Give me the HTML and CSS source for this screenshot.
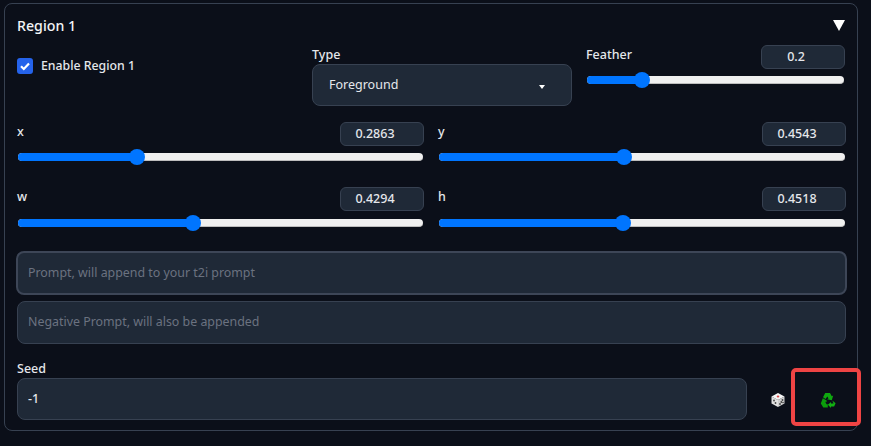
FILE: index.html
```html
<!DOCTYPE html>
<html lang="en">
<head>
<meta charset="utf-8">
<title>Region 1</title>
<link rel="stylesheet" href="styles.css">
</head>
<body>
<div class="panel">
  <div class="title-row"><span class="title">Region 1</span><span class="caret"></span></div>
  <div class="top-row">
    <label class="check"><span class="box"><svg width="12" height="12" viewBox="0 0 12 12"><path d="M2 6.2 4.8 9 10 3.4" fill="none" stroke="#fff" stroke-width="2.2"/></svg></span>Enable Region 1</label>
    <div class="type">
      <div class="label type-label">Type</div>
      <div class="select"><span>Foreground</span><span class="sel-caret"></span></div>
    </div>
    <div class="slider">
      <div class="slider-head"><span class="label">Feather</span><span class="num">0.2</span></div>
      <div class="track"><div class="fill" style="width:21.3%"></div></div>
    </div>
  </div>
  <div class="grid">
    <div class="slider">
      <div class="slider-head"><span class="label">x</span><span class="num">0.2863</span></div>
      <div class="track"><div class="fill" style="width:29.5%"></div></div>
    </div>
    <div class="slider">
      <div class="slider-head"><span class="label">y</span><span class="num">0.4543</span></div>
      <div class="track"><div class="fill" style="width:45.6%"></div></div>
    </div>
    <div class="slider">
      <div class="slider-head"><span class="label">w</span><span class="num">0.4294</span></div>
      <div class="track"><div class="fill" style="width:43.3%"></div></div>
    </div>
    <div class="slider">
      <div class="slider-head"><span class="label">h</span><span class="num">0.4518</span></div>
      <div class="track"><div class="fill" style="width:45.4%"></div></div>
    </div>
  </div>
  <div class="prompt focus">Prompt, will append to your t2i prompt</div>
  <div class="prompt neg">Negative Prompt, will also be appended</div>
  <div class="seed-row">
    <div class="seed">
      <div class="label seed-label">Seed</div>
      <div class="seed-input">-1</div>
    </div>
    <div class="tool dice">
      <svg width="16" height="16" viewBox="0 0 16 16">
        <path d="M8 1 14.500 4.500 8 8 1.500 4.500Z" fill="#f6f6f6"/>
        <path d="M1.500 4.500 8 8V15L1.500 11.500Z" fill="#e2e2e2"/>
        <path d="M8 8V15L14.500 11.500V4.500Z" fill="#cfcfcf"/>
        <ellipse cx="8" cy="4.500" rx="1.300" ry="1" fill="#d8484a"/>
        <circle cx="4" cy="8.500" r=".9" fill="#444"/><circle cx="5.500" cy="11" r=".9" fill="#444"/>
        <circle cx="10" cy="12" r=".9" fill="#444"/><circle cx="12.500" cy="8" r=".9" fill="#444"/><circle cx="11.300" cy="10" r=".9" fill="#444"/><circle cx="13" cy="10.500" r=".8" fill="#444"/>
      </svg>
    </div>
    <div class="tool recycle">
      <svg width="16" height="17" viewBox="0 0 16 17">
        <path d="M5.200 1H10L11.800 4.200 13.200 3.400 11.800 8.200 7 7.300 8.500 6.400 7.400 4.400 5.500 7 3 5.300Z" fill="#0fa80f"/>
        <path d="M2.800 6.300 6.700 8.500 6.500 9.900 5.200 9.800 6.500 12.300H7.800V15.400H3.300L.8 11.500Z" fill="#0b9c0b"/>
        <path d="M12.300 8.600 15.600 11.200 14.100 14.400H11V16L7.900 12.800 11 10V11.600H13.600Z" fill="#12b012"/>
      </svg>
    </div>
  </div>
</div>
<div class="highlight"></div>
</body>
</html>
```
FILE: styles.css
```css
* { box-sizing: border-box; }
html, body { margin: 0; height: 100%; }
body {
  background: #0b0f19;
  color: #e5e7eb;
  font-family: "Noto Sans", "Open Sans", sans-serif;
  font-size: 13px;
  line-height: 18px;
  padding: 3px 13px 0 4px;
  overflow: hidden;
  position: relative;
}
.panel {
  height: 428px;
  border: 1px solid #374151;
  border-radius: 8px;
  padding: 10px 12px 0;
}
.title-row {
  display: flex;
  justify-content: space-between;
  align-items: center;
  height: 22px;
}
.title { font-size: 14.200px; font-weight: 500; color: #f3f4f6; padding-top: 1px; }
.caret {
  width: 0; height: 0;
  border-left: 6.500px solid transparent;
  border-right: 6.500px solid transparent;
  border-top: 11px solid #fff;
}
.top-row {
  display: grid;
  grid-template-columns: 281px 260px 259px;
  column-gap: 14px;
  margin-top: 9px;
  height: 70px;
}
.check {
  display: flex;
  align-items: center;
  gap: 8px;
  height: 16px;
  margin-top: 13px;
  font-weight: 500;
  font-size: 12.300px;
}
.box {
  width: 16px; height: 16px;
  border-radius: 3px;
  background: #2563eb;
  display: flex;
  align-items: center;
  justify-content: center;
}
.label { font-weight: 500; font-size: 12.500px; color: #e5e7eb; }
.type-label { height: 18px; margin-top: 1px; line-height: 18px; }
.select {
  height: 42px;
  background: #1f2937;
  border: 1px solid #374151;
  border-radius: 8px;
  display: flex;
  align-items: center;
  justify-content: space-between;
  padding: 0 26px 0 16px;
  font-size: 12.500px;
}
.sel-caret {
  width: 0; height: 0;
  margin-top: 3px;
  border-left: 3.500px solid transparent;
  border-right: 3.500px solid transparent;
  border-top: 4px solid #fff;
}
.slider-head {
  display: flex;
  justify-content: space-between;
  align-items: flex-start;
  height: 24px;
}
.slider-head .label { line-height: 18px; margin-top: 1px; }
.num {
  width: 84px; height: 24px;
  background: #1f2937;
  border: 1px solid #374151;
  border-radius: 6px;
  text-align: center;
  padding-right: 14px;
  font-size: 12.500px;
  line-height: 22px;
  font-weight: 500;
}
.track {
  height: 8px;
  margin: 7px 1px 0;
  background: #f0f0f0;
  border-bottom: 1px solid #bdbdbd;
  border-radius: 4px;
  position: relative;
}
.grid .slider:nth-child(n+3) .track { margin-top: 8px; }
.fill {
  height: 8px;
  background: #0075ff;
  border-radius: 4px 0 0 4px;
  position: relative;
}
.fill::after {
  content: "";
  position: absolute;
  right: -8px;
  top: -4px;
  width: 16px; height: 16px;
  border-radius: 50%;
  background: #0075ff;
}
.grid {
  display: grid;
  grid-template-columns: 407px 408px;
  column-gap: 14px;
  row-gap: 26px;
  margin-top: 7px;
}
.prompt {
  background: #1f2937;
  border: 1px solid #374151;
  border-radius: 8px;
  color: #6b7280;
  font-size: 12.400px;
  padding-left: 10px;
  display: flex;
  align-items: center;
}
.prompt.focus {
  height: 44px;
  margin: 24px -2px 0 -1px;
  border: 2px solid #3d4657;
}
.prompt.neg { height: 43px; margin: 6px -1px 0 0; padding-bottom: 2px; }
.seed-row { display: flex; margin-top: 17px; align-items: flex-end; }
.seed { flex: none; width: 730px; }
.seed-label { height: 17px; line-height: 16px; }
.seed-input {
  height: 42px;
  background: #1f2937;
  border: 1px solid #374151;
  border-radius: 8px;
  padding-left: 10px;
  display: flex;
  align-items: center;
  font-size: 12.500px;
  font-weight: 500;
}
.tool { flex: none; height: 42px; display: flex; align-items: center; justify-content: center; }
.tool svg { display: block; margin-top: 2px; }
.dice { width: 62px; }
.recycle { width: 38px; }
.highlight {
  position: absolute;
  left: 791px;
  top: 368px;
  width: 70px;
  height: 58px;
  border: 4px solid #ef4444;
  border-radius: 5px;
}
```
